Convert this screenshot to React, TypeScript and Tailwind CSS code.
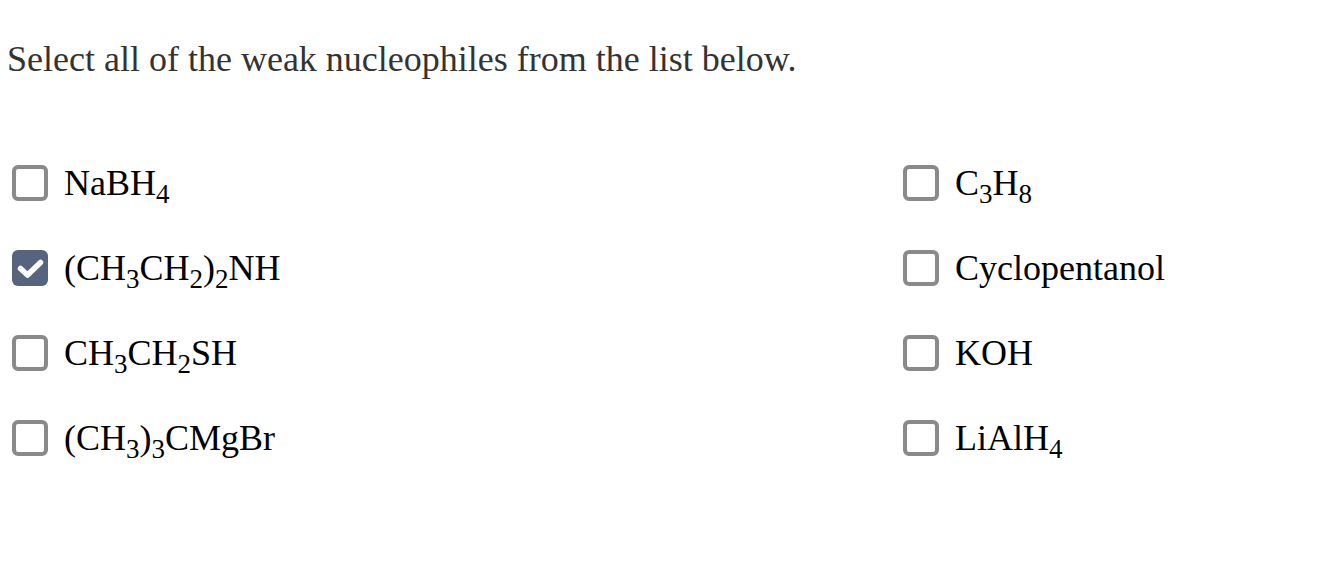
import React from "react";

type Item = { label: React.ReactNode; checked?: boolean };

const S = ({ children }: { children: React.ReactNode }) => (
  <sub className="bottom-[-0.33em]">{children}</sub>
);

const Box = ({ checked }: { checked?: boolean }) =>
  checked ? (
    <span className="flex h-[36px] w-[36px] shrink-0 items-center justify-center rounded-[6px] bg-[#56657d]">
      <svg width="36" height="36" viewBox="0 0 36 36">
        <path d="M8.5 18.5 L15.5 25 L28.5 12.5" fill="none" stroke="#fff" strokeWidth="5.5" strokeLinecap="round" strokeLinejoin="round" />
      </svg>
    </span>
  ) : (
    <span className="block h-[36px] w-[36px] shrink-0 rounded-[6px] border-[4px] border-[#8a8a8a] bg-white" />
  );

const Row = ({ item }: { item: Item }) => (
  <div className="flex h-[85px] items-center gap-[16px]">
    <Box checked={item.checked} />
    <span className="text-[36px] text-black">{item.label}</span>
  </div>
);

export default function App() {
  const left: Item[] = [
    { label: <>NaBH<S>4</S></> },
    { label: <>(CH<S>3</S>CH<S>2</S>)<S>2</S>NH</>, checked: true },
    { label: <>CH<S>3</S>CH<S>2</S>SH</> },
    { label: <>(CH<S>3</S>)<S>3</S>CMgBr</> },
  ];
  const right: Item[] = [
    { label: <>C<S>3</S>H<S>8</S></> },
    { label: <>Cyclopentanol</> },
    { label: <>KOH</> },
    { label: <>LiAlH<S>4</S></> },
  ];
  return (
    <div className="min-h-[582px] w-[1338px] bg-white font-['Liberation_Serif',serif]">
      <p className="pl-[7px] pt-[32px] text-[36px] text-[#333333]">
        Select all of the weak nucleophiles from the list below.
      </p>
      <div className="mt-[54px] grid grid-cols-[891px_1fr] pl-[12px]">
        <div className="flex flex-col">
          {left.map((it, i) => (
            <Row key={i} item={it} />
          ))}
        </div>
        <div className="flex flex-col">
          {right.map((it, i) => (
            <Row key={i} item={it} />
          ))}
        </div>
      </div>
    </div>
  );
}
